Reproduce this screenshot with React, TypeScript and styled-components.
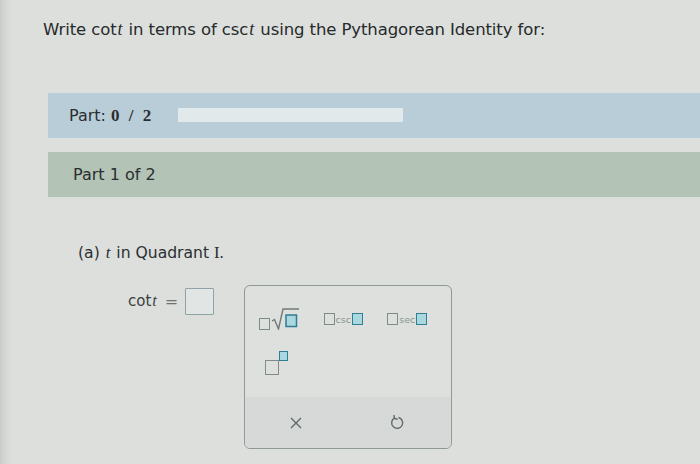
import React from "react";
import styled, { createGlobalStyle } from "styled-components";

const Global = createGlobalStyle`
  html, body { margin: 0; padding: 0; }
  body {
    background: #dadddb;
    font-family: "DejaVu Sans", Verdana, sans-serif;
    color: #2b2f30;
    width: 700px;
    height: 464px;
    overflow: hidden;
  }
`;

const Page = styled.div`
  width: 700px;
  height: 464px;
  box-sizing: border-box;
  border-left: 2px solid #c9ceca;
  background: linear-gradient(90deg, #cfd3d0 0px, #dcdfdc 10px, #dcdfdc 100%);
`;

const Header = styled.div`
  height: 93px;
  box-sizing: border-box;
  padding: 19px 0 0 41px;
  font-size: 16.5px;
  color: #262a2b;
  letter-spacing: -0.1px;
`;

const MathFn = styled.span`
  font-family: "DejaVu Sans", sans-serif;
`;

const Var = styled.i`
  font-family: "Liberation Serif", "DejaVu Serif", serif;
  font-size: 1.08em;
  padding: 0 1px 0 1px;
`;

const Content = styled.div`
  margin-left: 46px;
`;

const Band = styled.div<{ $tone: "blue" | "green" }>`
  height: 45px;
  display: flex;
  align-items: center;
  background: ${(p) => (p.$tone === "blue" ? "#b9cdd8" : "#b3c3b5")};
  font-size: 16px;
  color: #2a2e30;
`;

const PartBar = styled(Band)`
  padding-left: 21px;
  gap: 27px;
`;

const PartHeader = styled(Band)`
  margin-top: 14px;
  padding-left: 25px;
`;

const Bold = styled.b`
  font-family: "Liberation Serif", serif;
  font-size: 17px;
  word-spacing: 5px;
`;

const Progress = styled.div`
  width: 225px;
  height: 14px;
  background: #e2e9eb;
  margin-top: -2px;
  border-radius: 1px;
`;

const Question = styled.div`
  padding: 46px 0 0 30px;
  font-size: 15.6px;
  color: #2a2e30;
`;

const Roman = styled.span`
  font-family: "Liberation Serif", serif;
  font-size: 16.5px;
`;

const AnswerRow = styled.div`
  display: flex;
  align-items: flex-start;
  margin-top: 22px;
  margin-left: 80px;
`;

const Equation = styled.div`
  display: flex;
  align-items: center;
  gap: 7px;
  margin-top: 3px;
  font-size: 15px;
  color: #3a3f40;
`;

const Equals = styled.span`
  color: #6d7474;
  font-size: 16px;
`;

const AnswerBox = styled.div`
  width: 27px;
  height: 25px;
  border: 1.5px solid #8fa3a6;
  background: #e1e5e4;
  border-radius: 1px;
`;

const Keypad = styled.div`
  margin-left: 30px;
  width: 208px;
  height: 164px;
  box-sizing: border-box;
  border: 1.3px solid #8e9998;
  border-radius: 6px;
  display: flex;
  flex-direction: column;
  overflow: hidden;
  background: #dde0dd;
`;

const KeyGrid = styled.div`
  flex: 1;
  display: grid;
  grid-template-columns: repeat(3, 64px);
  grid-template-rows: 26px 26px;
  row-gap: 22px;
  padding: 20px 0 0 2px;
  justify-items: center;
  align-items: center;
`;

const KeyBottom = styled.div`
  height: 51px;
  display: grid;
  grid-template-columns: 1fr 1fr;
  align-items: center;
  justify-items: center;
  background: #d6d9d7;
  padding-right: 4px;
`;

const Key = styled.div`
  display: flex;
  align-items: flex-end;
  color: #7a8584;
`;

const Slot = styled.span<{ $filled?: boolean; $size?: number }>`
  display: inline-block;
  width: ${(p) => p.$size ?? 9}px;
  height: ${(p) => (p.$size ?? 9) + 1}px;
  box-sizing: border-box;
  border: 1.5px solid ${(p) => (p.$filled ? "#2f7e95" : "#7f8b8a")};
  background: ${(p) => (p.$filled ? "#a9d8df" : "transparent")};
`;

const FnLabel = styled.span`
  font-family: "DejaVu Sans", sans-serif;
  font-size: 9.5px;
  color: #8a9493;
  margin: 0 1px 1px;
  line-height: 1;
`;

const Sup = styled.div`
  display: flex;
  align-items: flex-start;
  margin-left: -6px;
`;

const SupSlot = styled(Slot)`
  margin-top: -9px;
`;

const IconBtn = styled.div`
  width: 24px;
  height: 24px;
  display: flex;
  align-items: center;
  justify-content: center;
`;

function SqrtKey() {
  return (
    <Key>
      <Slot $size={11} />
      <svg width="29" height="22" viewBox="0 0 29 22" style={{ marginLeft: 1 }}>
        <path
          d="M1 13 L3.5 11.5 L7.5 21 L12 1 L28 1"
          fill="none"
          stroke="#6f7b7a"
          strokeWidth="1.4"
        />
        <rect x="15" y="7" width="10.5" height="11.5" fill="#a9d8df" stroke="#2f7e95" strokeWidth="1.5" />
      </svg>
    </Key>
  );
}

function FnKey({ name }: { name: string }) {
  return (
    <Key>
      <Slot $size={11} />
      <FnLabel>{name}</FnLabel>
      <Slot $size={11} $filled />
    </Key>
  );
}

export default function App() {
  return (
    <>
      <Global />
      <Page>
        <Header>
          Write <MathFn>cot</MathFn>
          <Var>t</Var> in terms of <MathFn>csc</MathFn>
          <Var>t</Var> using the Pythagorean Identity for:
        </Header>
        <Content>
          <PartBar $tone="blue">
            <span>
              Part: <Bold>0 / 2</Bold>
            </span>
            <Progress />
          </PartBar>
          <PartHeader $tone="green">Part 1 of 2</PartHeader>
          <Question>
            (a) <Var>t</Var> in Quadrant <Roman>I.</Roman>
          </Question>
          <AnswerRow>
            <Equation>
              <span>
                cot<Var>t</Var>
              </span>
              <Equals>=</Equals>
              <AnswerBox />
            </Equation>
            <Keypad>
              <KeyGrid>
                <SqrtKey />
                <FnKey name="csc" />
                <FnKey name="sec" />
                <Sup>
                  <Slot $size={14} />
                  <SupSlot $size={9} $filled />
                </Sup>
              </KeyGrid>
              <KeyBottom>
                <IconBtn>
                  <svg width="14" height="14" viewBox="0 0 14 14">
                    <path d="M2 2 L12 12 M12 2 L2 12" stroke="#5f6a6b" strokeWidth="1.4" fill="none" />
                  </svg>
                </IconBtn>
                <IconBtn>
                  <svg width="16" height="17" viewBox="0 0 16 17">
                    <path
                      d="M5.2 4.2 A5.5 5.5 0 1 0 9.5 3.5"
                      stroke="#5f6a6b"
                      strokeWidth="1.4"
                      fill="none"
                    />
                    <path d="M5 1 L5.4 4.4 L8.6 5.2" stroke="#5f6a6b" strokeWidth="1.4" fill="none" />
                  </svg>
                </IconBtn>
              </KeyBottom>
            </Keypad>
          </AnswerRow>
        </Content>
      </Page>
    </>
  );
}
